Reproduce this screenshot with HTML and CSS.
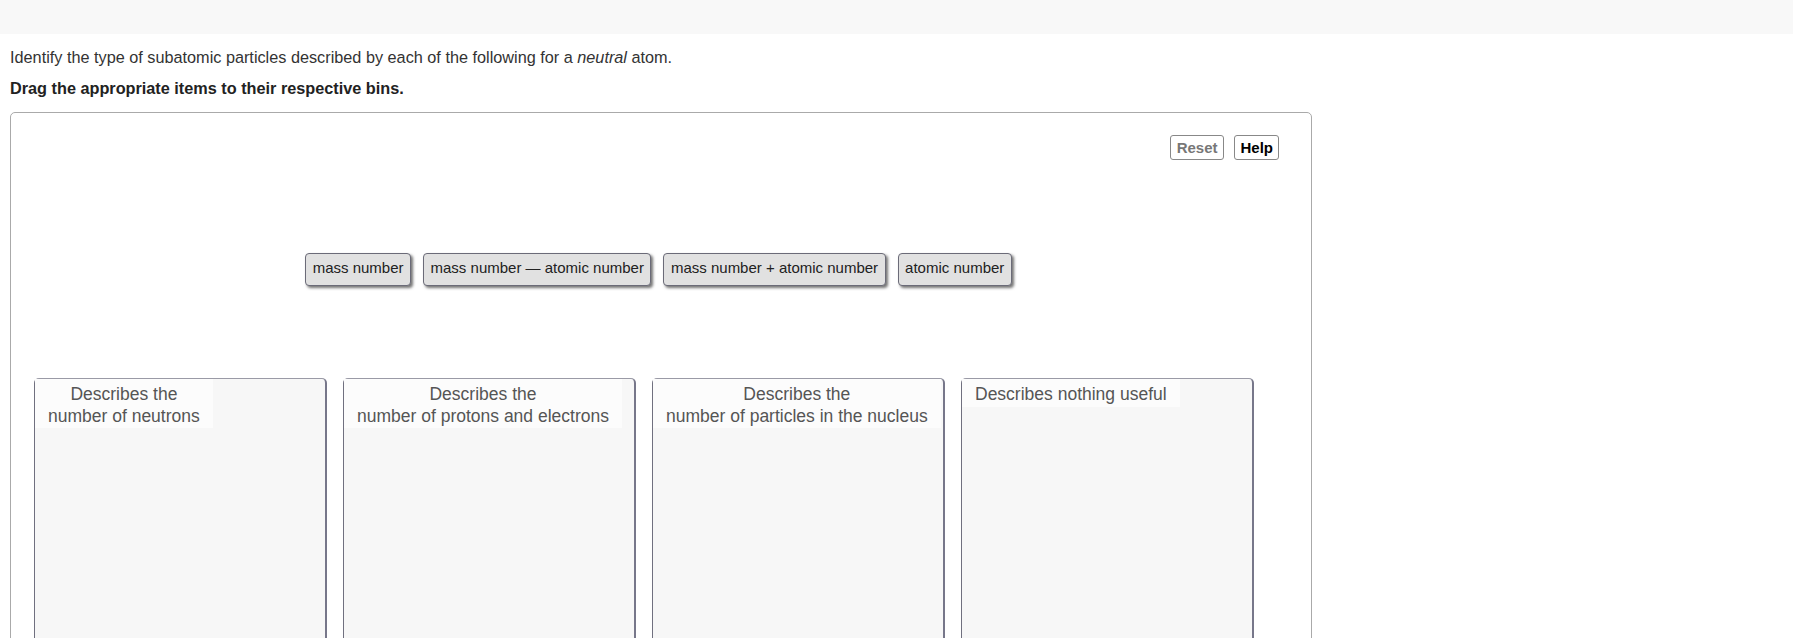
FILE: index.html
```html
<!DOCTYPE html>
<html lang="en">
<head>
<meta charset="utf-8">
<title>Subatomic particles</title>
<link rel="stylesheet" href="styles.css">
</head>
<body>
<div class="topbar"></div>
<p class="prompt">Identify the type of subatomic particles described by each of the following for a <em>neutral</em> atom.</p>
<p class="prompt strong">Drag the appropriate items to their respective bins.</p>
<div class="board">
  <div class="toolbar">
    <button class="tool reset">Reset</button>
    <button class="tool help">Help</button>
  </div>
  <div class="chips">
    <div class="chip">mass number</div>
    <div class="chip">mass number — atomic number</div>
    <div class="chip">mass number + atomic number</div>
    <div class="chip">atomic number</div>
  </div>
  <div class="bins">
    <div class="bin"><div class="bin-label">Describes the<br>number of neutrons</div></div>
    <div class="bin"><div class="bin-label">Describes the<br>number of protons and electrons</div></div>
    <div class="bin"><div class="bin-label">Describes the<br>number of particles in the nucleus</div></div>
    <div class="bin"><div class="bin-label">Describes nothing useful</div></div>
  </div>
</div>
</body>
</html>
```
FILE: styles.css
```css
* { box-sizing: border-box; }
body {
  margin: 0;
  background: #fff;
  font-family: "Liberation Sans", Arial, sans-serif;
  color: #333;
}
.topbar {
  height: 34px;
  background: #f8f8f8;
}
.prompt {
  margin: 14px 0 0 10px;
  font-size: 16.25px;
  line-height: 19px;
}
.prompt.strong {
  margin-top: 12px;
  font-weight: bold;
  color: #222;
}
.board {
  margin: 14px 0 0 10px;
  width: 1302px;
  height: 600px;
  border: 1px solid #aaa;
  border-radius: 5px;
  padding-top: 22px;
}
.toolbar {
  display: flex;
  justify-content: flex-end;
  gap: 10px;
  padding-right: 32px;
}
.tool {
  height: 25px;
  padding: 0 6px;
  border: 1px solid #888;
  border-radius: 3px;
  background: #fff;
  font-family: "Liberation Sans", Arial, sans-serif;
  font-size: 15px;
  font-weight: bold;
  line-height: 23px;
}
.tool.reset { color: #777; }
.tool.help { color: #000; padding: 0 5px; }
.chips {
  display: flex;
  justify-content: center;
  gap: 12px;
  margin-top: 93px;
  padding-right: 5px;
}
.chip {
  height: 33px;
  padding: 0 6.5px;
  border: 1px solid #6b6b78;
  border-radius: 4px;
  background: #e1e1e1;
  box-shadow: 2px 2px 3px rgba(0, 0, 0, 0.55);
  font-size: 15px;
  line-height: 27px;
  color: #222;
  white-space: nowrap;
}
.bins {
  display: flex;
  gap: 16px;
  margin-top: 92px;
  padding-left: 23px;
}
.bin {
  width: 293px;
  height: 320px;
  background: #f7f7f7;
  border-top: 1px solid #9a9aa6;
  border-left: 1px solid #70707f;
  border-right: 2px solid #77778a;
  border-radius: 5px 5px 0 0;
}
.bin-label {
  display: inline-block;
  padding: 5px 13px 1px;
  background: #fcfcfc;
  color: #555;
  font-size: 17.5px;
  line-height: 21.5px;
  text-align: center;
  white-space: nowrap;
}
```
